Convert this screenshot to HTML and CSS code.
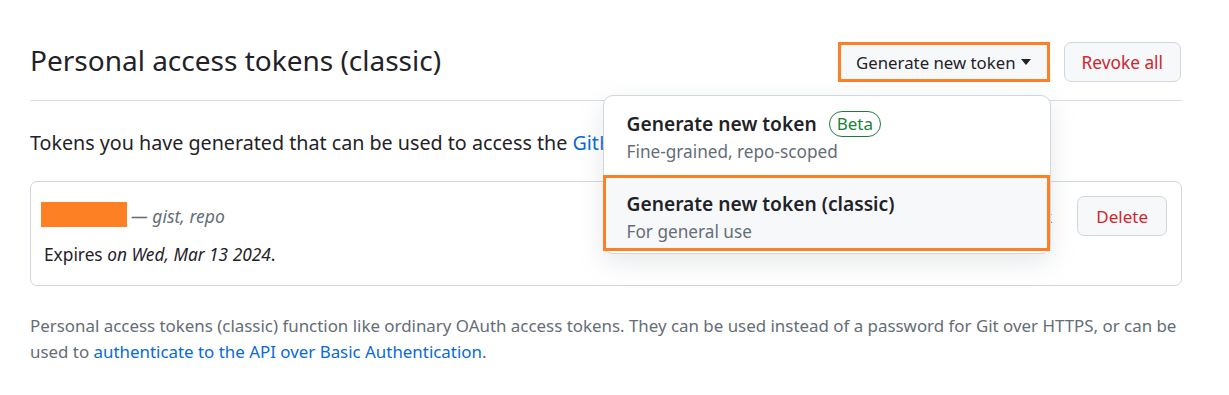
FILE: index.html
```html
<!DOCTYPE html>
<html lang="en">
<head>
  <meta charset="UTF-8">
  <title>Personal access tokens (classic)</title>
  <link rel="stylesheet" href="styles.css">
</head>
<body>

  <div class="pagina">
    <div class="cabecalho">
      <h2 class="titulo">Personal access tokens (classic)</h2>
      <div class="acoes">
        <div class="menu">
          <button class="btn btn-gerar">Generate new token<span class="seta"></span></button>

          <!-- Menu aberto -->
          <div class="dropdown">
            <div class="item">
              <div class="item-titulo">Generate new token <span class="beta">Beta</span></div>
              <div class="item-desc">Fine-grained, repo-scoped</div>
            </div>
            <div class="item item-ativo">
              <div class="item-titulo">Generate new token (classic)</div>
              <div class="item-desc">For general use</div>
            </div>
          </div>
        </div>
        <button class="btn btn-perigo btn-revogar">Revoke all</button>
      </div>
    </div>

    <p class="intro">Tokens you have generated that can be used to access the <a href="#">GitHub API</a>.</p>

    <div class="caixa">
      <div class="token">
        <div class="token-linha">
          <div class="token-nome"><span class="tarja"></span><em>— gist, repo</em></div>
          <span class="uso">Last used within the last week</span>
          <button class="btn btn-perigo btn-delete">Delete</button>
        </div>
        <div class="token-expira">Expires <em>on Wed, Mar 13 2024</em>.</div>
      </div>
    </div>

    <p class="nota">Personal access tokens (classic) function like ordinary OAuth access tokens. They can be used instead of a password for Git over HTTPS, or can be used to <a href="#">authenticate to the API over Basic Authentication</a>.</p>
  </div>

</body>
</html>
```

FILE: styles.css
```css
body {
  font-family: "Noto Sans", "Open Sans", sans-serif;
  color: #1f2328;
  background: #fff;
  margin: 0;
}
a {
  color: #0969da;
  text-decoration: none;
}
.pagina {
  width: 1152px;
  padding-left: 30px;
}
.cabecalho {
  display: flex;
  justify-content: space-between;
  align-items: center;
  padding: 42px 0 18px;
  border-bottom: 1px solid #d8dee4;
}
.titulo {
  margin: 0;
  font-size: 28px;
  font-weight: 400;
  margin-top: -4px;
}
.acoes {
  display: flex;
  align-items: center;
  gap: 14px;
  margin-right: 1px;
}
.menu {
  position: relative;
}
.btn {
  font-family: inherit;
  font-size: 17px;
  height: 40px;
  padding: 0 17px;
  border: 1px solid #d0d7de;
  border-radius: 7px;
  background: #f6f8fa;
  color: #1f2328;
  cursor: pointer;
}
.btn-gerar {
  display: flex;
  align-items: center;
  border: 3px solid #fd8025;
  border-radius: 0;
  padding: 0 16px 0 15px;
  font-size: 16.8px;
}
.seta {
  display: inline-block;
  width: 0;
  height: 0;
  border-left: 5px solid transparent;
  border-right: 5px solid transparent;
  border-top: 6px solid #1f2328;
  margin-left: 5px;
}
.btn-perigo {
  color: #d1242f;
}
.btn-revogar {
  font-size: 17.3px;
}
.dropdown {
  position: absolute;
  top: calc(100% + 13px);
  right: -1px;
  width: 446px;
  background: #fff;
  border: 1px solid #d0d7de;
  border-radius: 10px;
  box-shadow: 0 8px 24px rgba(140, 149, 159, 0.22);
  z-index: 10;
}
.item {
  padding: 14px 23px 10px;
}
.item-titulo {
  display: flex;
  align-items: center;
  gap: 12px;
  font-size: 19.2px;
  font-weight: 600;
  line-height: 28px;
}
.item-desc {
  font-size: 17.2px;
  color: #656d76;
  line-height: 26px;
  margin-top: 1px;
}
.item-ativo {
  background: #f6f8fa;
  border: 3px solid #fd8025;
  margin: 0 0 2px -1px;
  padding: 12px 21px 3px;
}
.beta {
  display: inline-block;
  font-size: 17px;
  font-weight: 400;
  color: #1a7f37;
  border: 1px solid #1a7f37;
  border-radius: 14px;
  padding: 0 7px;
  line-height: 24px;
}
.intro {
  font-size: 19.7px;
  line-height: 27px;
  margin: 28px 0 25px;
}
.caixa {
  border: 1px solid #d0d7de;
  border-radius: 7px;
}
.token {
  padding: 14px 13px 17px 10px;
}
.token-linha {
  display: flex;
  align-items: center;
}
.token-nome {
  flex: 1;
  display: flex;
  align-items: center;
  gap: 4px;
  color: #656d76;
  font-size: 17.5px;
}
.tarja {
  display: inline-block;
  width: 86px;
  height: 25px;
  margin-top: -3px;
  background: #fd8025;
}
.token-expira {
  font-size: 17.3px;
  line-height: 26px;
  margin-top: 6px;
  padding-left: 3px;
}
.uso {
  color: #656d76;
  font-size: 17px;
  margin-right: 25px;
}
.btn-delete {
  padding: 0 18px;
  margin-right: 1px;
}
.nota {
  color: #656d76;
  font-size: 16.9px;
  line-height: 26px;
  margin: 27px 0 0;
}
```
